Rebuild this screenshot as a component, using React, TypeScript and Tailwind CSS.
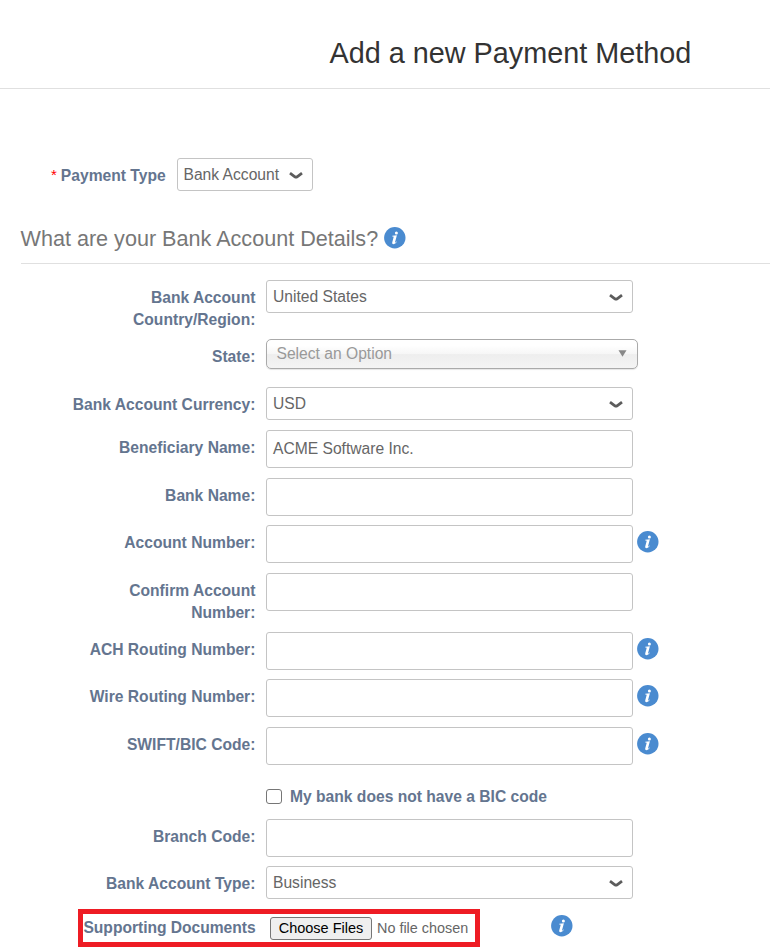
import type { ReactNode } from "react";

function InfoIcon() {
  return (
    <svg className="block h-[22px] w-[22px] shrink-0" viewBox="0 0 22 22" aria-label="Info">
      <circle cx="10.8" cy="10.8" r="10.7" fill="#4a8bd0" />
      <circle cx="12.4" cy="5.9" r="1.5" fill="#fff" />
      <path
        d="M8.3 8.8 L12.9 8.2 L11.1 14.9 Q10.9 15.8 11.4 15.5 Q11.9 15.2 12.4 14.4 L12.9 14.8 Q11.4 17.2 9.5 17.2 Q7.8 17.1 8.2 15.4 L9.6 10.3 Q9.7 9.6 9.2 9.5 L8.2 9.5 Z"
        fill="#fff"
      />
    </svg>
  );
}

function Chevron() {
  return (
    <svg className="block h-[9px] w-[14px] shrink-0" viewBox="0 0 14 9" fill="none">
      <path d="M1 2.2 L5.9 5.8 Q7 6.5 8.1 5.8 L13 2.2" stroke="#5c5c5c" strokeWidth="2.8" />
    </svg>
  );
}

function Select({ value }: { value: string }) {
  return (
    <div className="flex h-[33px] w-[367px] items-center justify-between rounded-[3px] border border-[#c4c4c4] bg-white pr-[9px] pl-[6px] text-[#666]">
      <span>{value}</span>
      <span className="pt-[2px]">
        <Chevron />
      </span>
    </div>
  );
}

function TextBox({ value = "" }: { value?: string }) {
  return (
    <div className="flex h-[38px] w-[367px] items-center rounded-[3px] border border-[#c4c4c4] bg-white pl-[6px] text-[#666]">
      {value}
    </div>
  );
}

function Row({
  label,
  height,
  info = false,
  children,
}: {
  label: ReactNode;
  height: string;
  info?: boolean;
  children: ReactNode;
}) {
  return (
    <div className={`flex items-start ${height}`}>
      <div className="mr-[10px] w-[256px] shrink-0 pt-[7px] pr-[0.6px] text-right font-bold text-[#64758f]">
        {label}
      </div>
      {children}
      {info && (
        <div className="ml-1 pt-[6px]">
          <InfoIcon />
        </div>
      )}
    </div>
  );
}

export default function App() {
  return (
    <div className="h-[951px] w-[773px] overflow-hidden bg-white font-['Liberation_Sans',Arial,sans-serif] text-[15.63px] leading-[22px]">
      <header className="h-[89px] w-[770px] border-b border-[#e0e0e0] pt-[36px] pl-[329.5px]">
        <h1 className="text-[28.8px] leading-[34px] whitespace-nowrap text-[#333]">
          Add a new Payment Method
        </h1>
      </header>

      <div className="flex h-[136px] items-start pt-[69px] pl-[51px]">
        <div className="flex w-[126px] pt-[7px]">
          <span className="-mt-px mr-[4px] text-[15px] text-[#f00]">*</span>
          <span className="font-bold text-[#64758f]">Payment Type</span>
        </div>
        <div className="flex h-[33px] w-[136px] items-center justify-between rounded-[3px] border border-[#c4c4c4] pr-[9px] pl-[5.5px] text-[#666]">
          <span>Bank Account</span>
          <span className="pt-[2px]">
            <Chevron />
          </span>
        </div>
      </div>

      <div className="ml-[21px] flex h-[39px] w-[749px] items-start border-b border-[#e0e0e0] pt-[2px]">
        <h2 className="-ml-[0.5px] mr-[5.5px] w-[358px] text-[21.6px] leading-[24px] whitespace-nowrap text-[#777]">
          What are your Bank Account Details?
        </h2>
        <InfoIcon />
      </div>

      <main className="pt-[16px]">
        <Row height="h-[59px]" label={<>Bank Account<br />Country/Region:</>}>
          <Select value="United States" />
        </Row>
        <Row height="h-[48px]" label="State:">
          <div className="flex h-[30px] w-[372px] items-center justify-between rounded-[5px] border border-[#aaa] bg-[linear-gradient(#fff_20%,#f6f6f6_50%,#eee_52%,#f4f4f4_100%)] pr-[10px] pb-[1px] pl-[9.5px] text-[#999] shadow-[0_1px_1px_rgba(0,0,0,0.1)]">
            <span>Select an Option</span>
            <svg className="block h-[7px] w-[9px]" viewBox="0 0 9 7">
              <path d="M0.5 0.3 H8.5 L4.5 6.8 Z" fill="#888" />
            </svg>
          </div>
        </Row>
        <Row height="h-[43px]" label="Bank Account Currency:">
          <Select value="USD" />
        </Row>
        <Row height="h-[48px]" label="Beneficiary Name:">
          <TextBox value="ACME Software Inc." />
        </Row>
        <Row height="h-[47px]" label="Bank Name:">
          <TextBox />
        </Row>
        <Row height="h-[48px]" label="Account Number:" info>
          <TextBox />
        </Row>
        <Row height="h-[59px]" label={<>Confirm Account<br />Number:</>}>
          <TextBox />
        </Row>
        <Row height="h-[47px]" label="ACH Routing Number:" info>
          <TextBox />
        </Row>
        <Row height="h-[48px]" label="Wire Routing Number:" info>
          <TextBox />
        </Row>
        <Row height="h-[58px]" label="SWIFT/BIC Code:" info>
          <TextBox />
        </Row>
        <div className="flex h-[34px] items-start pl-[266px]">
          <div className="mt-[4px] mr-[8px] h-[15px] w-[16px] rounded-[3px] border border-[#767676] bg-white" />
          <span className="pt-px font-bold text-[#64758f]">My bank does not have a BIC code</span>
        </div>
        <Row height="h-[47px]" label="Branch Code:">
          <TextBox />
        </Row>
        <Row height="h-[43px]" label="Bank Account Type:">
          <Select value="Business" />
        </Row>
        <div className="ml-[78px] flex h-[38px] items-start">
          <div className="flex h-[38px] w-[402px] items-start border-[5px] border-[#ee1c24]">
            <div className="w-[173px] shrink-0 pt-[3px] pr-[0.4px] text-right font-bold tracking-[-0.03px] whitespace-nowrap text-[#64758f]">
              Supporting Documents
            </div>
            <div className="mt-[3px] ml-[14px] flex h-[23px] w-[102px] shrink-0 items-center justify-center rounded-[3px] border border-[#767676] bg-[#efefef] pb-px text-[14.5px] leading-[18px] text-black">
              Choose Files
            </div>
            <span className="mt-[3px] ml-[5px] text-[14.4px] leading-[23px] whitespace-nowrap text-[#666]">
              No file chosen
            </span>
          </div>
          <div className="ml-[71px] pt-[6px]">
            <InfoIcon />
          </div>
        </div>
      </main>
    </div>
  );
}
